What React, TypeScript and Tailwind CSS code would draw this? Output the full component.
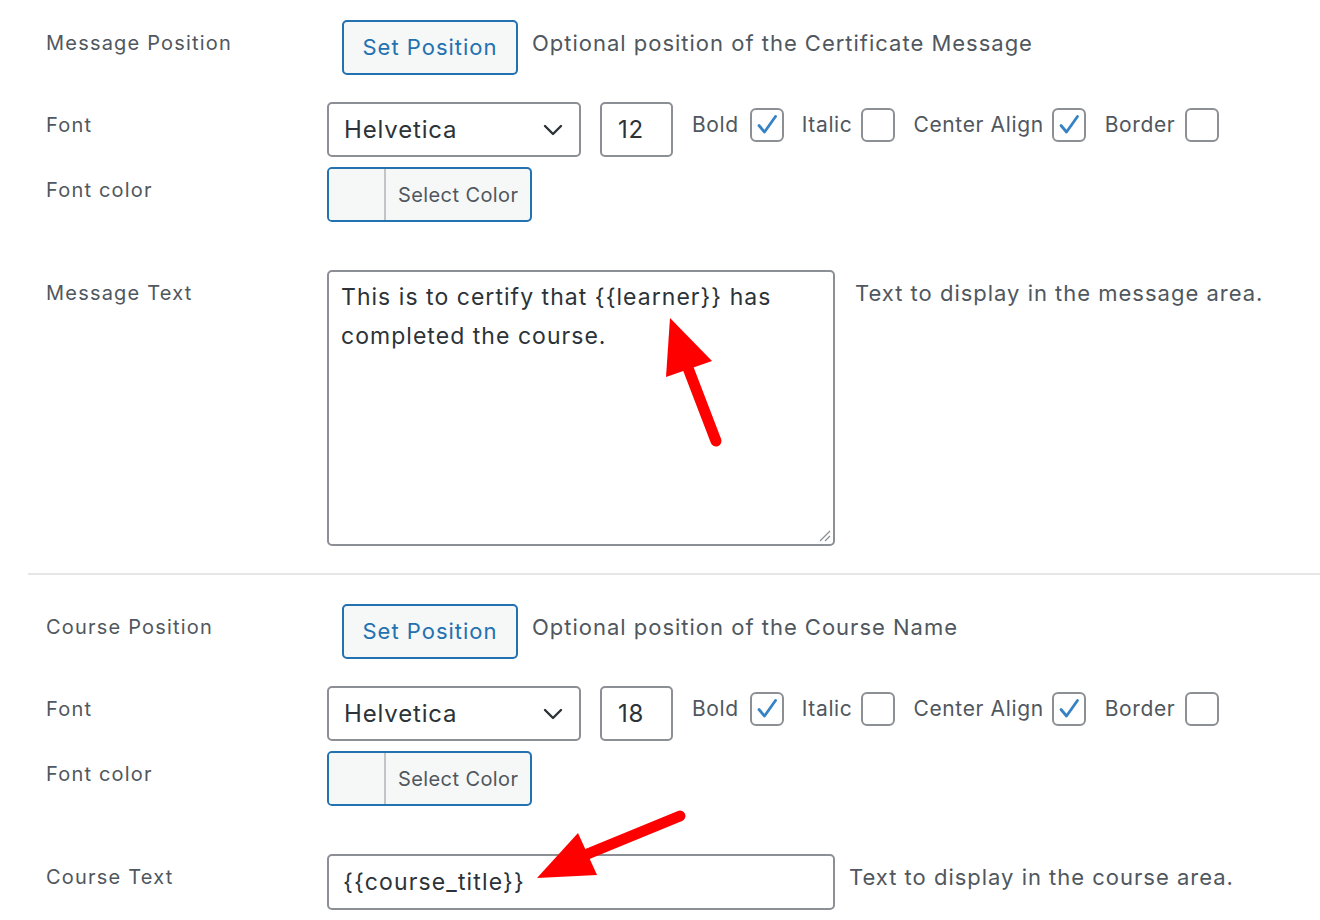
import React from 'react';

const font = { fontFamily: 'Inter, "Noto Sans", sans-serif' };

function Label({ children }: { children: React.ReactNode }) {
  return <div className="w-[327px] shrink-0 pl-[46px] pt-[9px] text-[20px] leading-[28px] tracking-[0.06em] text-[#50575e]">{children}</div>;
}

function Desc({ children, className = '' }: { children: React.ReactNode; className?: string }) {
  return <div className={`pt-[8px] text-[22px] leading-[30px] tracking-[0.045em] text-[#50575e] ${className}`}>{children}</div>;
}

function Checkbox({ checked }: { checked?: boolean }) {
  return (
    <span className="flex h-[34px] w-[34px] items-center justify-center rounded-[6px] border-2 border-[#8c8f94] bg-white">
      {checked && (
        <svg width="24" height="24" viewBox="0 0 24 24">
          <path d="M4 12.5l5.5 6.5L20.5 3.5" fill="none" stroke="#3582c4" strokeWidth="2.8" strokeLinecap="round" strokeLinejoin="round" />
        </svg>
      )}
    </span>
  );
}

function Check({ label, checked, gap }: { label: string; checked?: boolean; gap: string }) {
  return (
    <div className={`flex items-center ${gap}`}>
      <span className="text-[21px] tracking-[0.03em] text-[#50575e]">{label}</span>
      <Checkbox checked={checked} />
    </div>
  );
}

function SetPosition({ label, desc }: { label: string; desc: string }) {
  return (
    <div className="flex items-start">
      <Label>{label}</Label>
      <button className="ml-[15px] h-[55px] w-[176px] rounded-[5px] border-2 border-[#2271b1] bg-[#f6f7f7] text-[22px] tracking-[0.045em] text-[#2271b1]">
        Set Position
      </button>
      <Desc className="ml-[14px]">{desc}</Desc>
    </div>
  );
}

function FontRow({ size }: { size: string }) {
  return (
    <div className="flex items-start">
      <Label>Font</Label>
      <div className="flex h-[55px] w-[254px] items-center justify-between rounded-[5px] border-2 border-[#8c8f94] bg-white pl-[15px] pr-[16px] text-[24px] tracking-[0.035em] text-[#2c3338]">
        <span>Helvetica</span>
        <svg width="20" height="12" viewBox="0 0 20 12">
          <path d="M2 2l8 8 8-8" fill="none" stroke="#2c3338" strokeWidth="2.4" strokeLinecap="round" strokeLinejoin="round" />
        </svg>
      </div>
      <div className="ml-[19px] flex h-[55px] w-[73px] items-center rounded-[5px] border-2 border-[#8c8f94] bg-white pl-[16px] text-[24px] tracking-[0.03em] text-[#2c3338]">
        {size}
      </div>
      <div className="ml-[19px] flex h-[46px] items-center">
        <Check label="Bold" checked gap="gap-[11px]" />
        <div className="ml-[18px]"><Check label="Italic" gap="gap-[9px]" /></div>
        <div className="ml-[18px]"><Check label="Center Align" checked gap="gap-[8px]" /></div>
        <div className="ml-[19px]"><Check label="Border" gap="gap-[10px]" /></div>
      </div>
    </div>
  );
}

function ColorRow() {
  return (
    <div className="flex items-start">
      <Label>Font color</Label>
      <div className="flex h-[55px] w-[205px] overflow-hidden rounded-[5px] border-2 border-[#2271b1] bg-[#f6f7f7]">
        <div className="w-[57px] border-r-2 border-[#c3c4c7] bg-[#f6f7f7]" />
        <div className="flex flex-1 items-center pl-[12px] text-[20px] tracking-[0.02em] text-[#50575e]">Select Color</div>
      </div>
    </div>
  );
}

export default function App() {
  return (
    <div className="relative h-[920px] w-[1320px] overflow-hidden bg-white" style={font}>
      <div className="pt-[20px]">
        <SetPosition label="Message Position" desc="Optional position of the Certificate Message" />
        <div className="mt-[27px]"><FontRow size="12" /></div>
        <div className="mt-[10px]"><ColorRow /></div>
        <div className="mt-[48px] flex items-start">
          <Label>Message Text</Label>
          <div className="relative h-[276px] w-[508px] shrink-0 rounded-[5px] border-2 border-[#8c8f94] bg-white px-[12px] pt-[6px] text-[23px] leading-[39px] tracking-[0.045em] text-[#2c3338]">
            This is to certify that {'{{learner}}'} has completed the course.
            <svg className="absolute bottom-[2px] right-[2px]" width="14" height="14" viewBox="0 0 14 14">
              <path d="M3 13L13 3M8 13L13 8" stroke="#8c8f94" strokeWidth="1.3" />
            </svg>
          </div>
          <Desc className="ml-[20px]">Text to display in the message area.</Desc>
        </div>
        <div className="ml-[28px] mt-[27px] h-[2px] bg-[#e6e6e6]" />
        <div className="mt-[29px]"><SetPosition label="Course Position" desc="Optional position of the Course Name" /></div>
        <div className="mt-[27px]"><FontRow size="18" /></div>
        <div className="mt-[10px]"><ColorRow /></div>
        <div className="mt-[48px] flex items-start">
          <Label>Course Text</Label>
          <div className="flex h-[56px] w-[508px] shrink-0 items-center rounded-[5px] border-2 border-[#8c8f94] bg-white pl-[14px] text-[23px] tracking-[0.05em] text-[#2c3338]">
            {'{{course_title}}'}
          </div>
          <Desc className="ml-[14px]">Text to display in the course area.</Desc>
        </div>
      </div>

      <svg className="pointer-events-none absolute left-0 top-0" width="1320" height="920">
        <line x1="716" y1="441" x2="688" y2="368" stroke="#f00" strokeWidth="11" strokeLinecap="round" />
        <polygon points="670,318 666,377 712,361" fill="#f00" />
        <line x1="680" y1="816" x2="585" y2="855" stroke="#f00" strokeWidth="11" strokeLinecap="round" />
        <polygon points="537,878 578,833 597,875" fill="#f00" />
      </svg>
    </div>
  );
}
